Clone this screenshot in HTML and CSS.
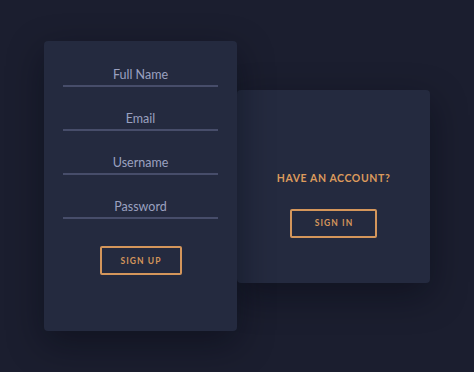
FILE: index.html
```html
<!DOCTYPE html>
<html>
<head>
<meta charset="utf-8">
<link rel="stylesheet" href="styles.css">
</head>
<body>
<div class="stage">
  <div class="card signup">
    <div class="field">Full Name</div>
    <div class="field">Email</div>
    <div class="field">Username</div>
    <div class="field">Password</div>
    <button class="btn">SIGN UP</button>
  </div>
  <div class="card signin">
    <div class="title">HAVE AN ACCOUNT?</div>
    <button class="btn wide">SIGN IN</button>
  </div>
</div>
</body>
</html>
```
FILE: styles.css
```css
html, body {
  margin: 0;
  height: 100%;
  background: #1b1e2f;
  font-family: "Lato", "Open Sans", sans-serif;
}
.stage {
  display: flex;
  align-items: center;
  padding: 41px 0 0 44px;
}
.card {
  background: #242a3f;
  border-radius: 4px;
  box-shadow: 0 12px 36px rgba(5, 7, 15, 0.45);
  box-sizing: border-box;
}
.signup {
  position: relative;
  z-index: 2;
  width: 193px;
  height: 290px;
  padding: 26px 19px 0;
  display: flex;
  flex-direction: column;
  align-items: stretch;
  gap: 24px;
}
.field {
  color: #9ba1c0;
  font-size: 12.5px;
  line-height: 16px;
  text-align: center;
  padding-bottom: 2px;
  border-bottom: 2px solid #474d6a;
}
.btn {
  font-family: "Lato", "Open Sans", sans-serif;
  background: transparent;
  border: 2px solid #d4965b;
  border-radius: 2px;
  color: #d4965b;
  font-weight: 700;
  font-size: 8.5px;
  letter-spacing: 1.1px;
  width: 82px;
  height: 29px;
  padding: 0 0 0 1px;
  align-self: center;
  margin-top: 3px;
}
.signin {
  width: 193px;
  height: 193px;
  padding-top: 81px;
  display: flex;
  flex-direction: column;
  align-items: center;
  gap: 24px;
}
.title {
  color: #dc9a5c;
  font-weight: 700;
  font-size: 10.5px;
  line-height: 14px;
  letter-spacing: 0.6px;
}
.btn.wide {
  width: 87px;
  margin-top: 0;
}
```
